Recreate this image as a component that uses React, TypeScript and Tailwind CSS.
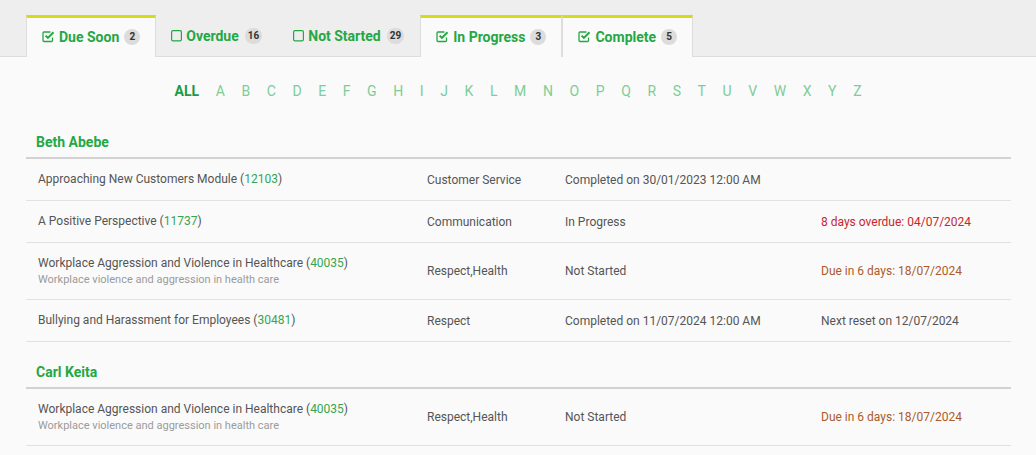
import React from "react";

function CheckIcon({ checked }: { checked: boolean }) {
  return checked ? (
    <svg width="13" height="13" viewBox="0 0 13 13" className="shrink-0">
      <path
        d="M10.5 7.5V10.5a1 1 0 0 1-1 1h-7.5a1 1 0 0 1-1-1V3a1 1 0 0 1 1-1h6.5"
        fill="none"
        stroke="currentColor"
        strokeWidth="1.3"
      />
      <path d="M3.6 5.6l2.3 2.3 5.6-5.6" fill="none" stroke="currentColor" strokeWidth="2" />
    </svg>
  ) : (
    <svg width="11" height="13" viewBox="0 0 11 13" className="shrink-0">
      <rect x="0.6" y="1.6" width="9.8" height="10.2" rx="1.4" fill="none" stroke="currentColor" strokeWidth="1.2" />
    </svg>
  );
}

const tabs = [
  { label: "Due Soon", count: 2, active: true },
  { label: "Overdue", count: 16, active: false },
  { label: "Not Started", count: 29, active: false },
  { label: "In Progress", count: 3, active: true },
  { label: "Complete", count: 5, active: true },
];

const letters = "ABCDEFGHIJKLMNOPQRSTUVWXYZ".split("");

type Row = {
  title: string;
  id: string;
  sub?: string;
  cat: string;
  status: string;
  note?: string;
  noteColor?: string;
};

const sections: { name: string; rows: Row[] }[] = [
  {
    name: "Beth Abebe",
    rows: [
      { title: "Approaching New Customers Module", id: "12103", cat: "Customer Service", status: "Completed on 30/01/2023 12:00 AM" },
      { title: "A Positive Perspective", id: "11737", cat: "Communication", status: "In Progress", note: "8 days overdue: 04/07/2024", noteColor: "text-[#c8262b]" },
      {
        title: "Workplace Aggression and Violence in Healthcare",
        id: "40035",
        sub: "Workplace violence and aggression in health care",
        cat: "Respect,Health",
        status: "Not Started",
        note: "Due in 6 days: 18/07/2024",
        noteColor: "text-[#ad5a28]",
      },
      { title: "Bullying and Harassment for Employees", id: "30481", cat: "Respect", status: "Completed on 11/07/2024 12:00 AM", note: "Next reset on 12/07/2024", noteColor: "text-[#555555]" },
    ],
  },
  {
    name: "Carl Keita",
    rows: [
      {
        title: "Workplace Aggression and Violence in Healthcare",
        id: "40035",
        sub: "Workplace violence and aggression in health care",
        cat: "Respect,Health",
        status: "Not Started",
        note: "Due in 6 days: 18/07/2024",
        noteColor: "text-[#ad5a28]",
      },
    ],
  },
];

export default function App() {
  return (
    <div className="min-h-screen bg-[#fafafa] font-['Roboto',sans-serif]">
      <div className="h-[57px] bg-[#eeeeee] border-b border-[#dddddd] flex items-end pl-[26px]">
        {tabs.map((t) => (
          <div
            key={t.label}
            className={
              t.active
                ? "h-[42px] -mb-px pb-[2px] bg-[#fafafa] border-t-[3px] border-t-[#d3dd17] border-x border-x-[#dddddd] pl-[15px] pr-[15px] flex items-center text-[#25a744]"
                : "h-[42px] pb-[2px] border-t-[3px] border-t-transparent pl-[15px] pr-4 flex items-center text-[#25a744]"
            }
          >
            <CheckIcon checked={t.active} />
            <span className="ml-[4px] text-[14px] font-bold leading-none">{t.label}</span>
            <span
              className={
                (t.active ? "ml-[5px]" : "ml-[6px]") +
                " min-w-[16px] h-[16px] px-[3px] rounded-full bg-[#dcdcdc] text-[#333] text-[10px] font-bold flex items-center justify-center leading-none"
              }
            >
              {t.count}
            </span>
          </div>
        ))}
      </div>

      <div className="flex justify-center pt-6 pb-[11px] text-[14px] leading-[20px]">
        <span className="px-[8.3px] font-bold text-[#1f9a44]">ALL</span>
        {letters.map((l) => (
          <span key={l} className="px-[8.3px] text-[#7dcd97]">
            {l}
          </span>
        ))}
      </div>

      <div className="pl-[26px] pr-[25px]">
        {sections.map((s) => (
          <div key={s.name} className="mt-[15px]">
            <div className="h-[32px] pl-[10px] flex items-center border-b-2 border-[#d2d2d2] text-[14px] font-bold text-[#25a744]">
              {s.name}
            </div>
            {s.rows.map((r, i) => (
              <div
                key={i}
                className={
                  (r.sub ? "h-[57px] " : "h-[42px] ") +
                  "grid grid-cols-[389px_138px_256px_1fr] items-center pl-3 border-b border-[#e2e2e2] text-[12px] text-[#555555]"
                }
              >
                <div className="leading-[17px]">
                  <div>
                    {r.title} (<span className="text-[#35a64e]">{r.id}</span>)
                  </div>
                  {r.sub && <div className="text-[11px] text-[#9a9a9a] leading-[16px]">{r.sub}</div>}
                </div>
                <div>{r.cat}</div>
                <div>{r.status}</div>
                <div className={r.noteColor}>{r.note}</div>
              </div>
            ))}
          </div>
        ))}
      </div>
    </div>
  );
}
